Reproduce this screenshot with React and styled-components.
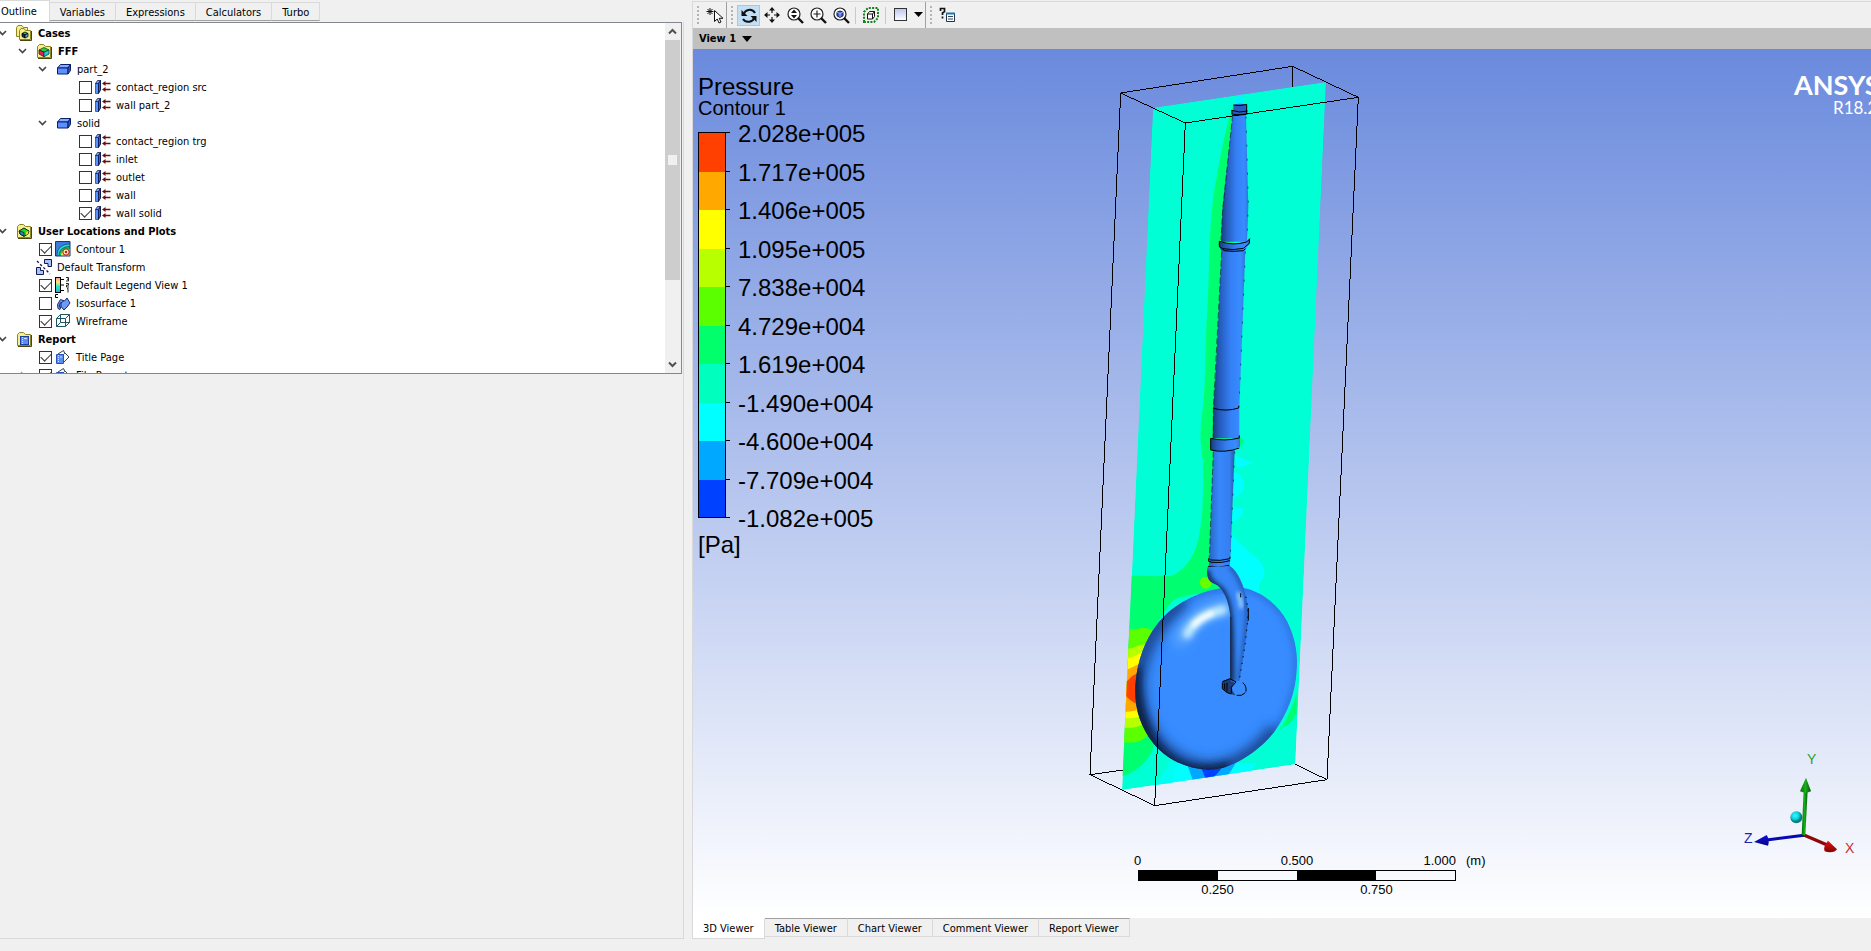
import { useState } from "react";
import styled, { createGlobalStyle, css } from "styled-components";

const GlobalStyle = createGlobalStyle`
    * {
        box-sizing: border-box;
    }

    body {
        margin: 0;
        background: #f0f0f0;
        color: #000;
        font-family: "DejaVu Sans Condensed", "Noto Sans", sans-serif;
        font-size: 11px;
        line-height: 18px;
    }

    button, input {
        font: inherit;
        color: inherit;
        margin: 0;
        padding: 0;
        border: 0;
        background: none;
    }

    ul {
        list-style: none;
        margin: 0;
        padding: 0;
    }
`

/* ---------- tree icons ---------- */

const Folder = ({ children }) => (
    <>
        <path d="M1.500 14.500V3.500l2-2h4l2 2h5v11z" fill="#f5ef8e" stroke="#8c8420" />
        <path d="M15.500 4v11.500H2" fill="none" stroke="#4a4510" />
        {children}
    </>
)

const cube = (
    <>
        <path d="M3 7l5-2.500L13 7 8 9.200z" fill="#25d62c" stroke="#06280a" strokeWidth=".7" />
        <path d="M3 7l5 2.200v4.500L3 11z" fill="#e0235e" stroke="#3b0616" strokeWidth=".7" />
        <path d="M13 7L8 9.200v4.500l5-2.700z" fill="#27c8dc" stroke="#06303b" strokeWidth=".7" />
    </>
)

const icons = {
    cases: (
        <>
            <path d="M.5 11.500V2.500l1.500-2h4l1.500 2h4v9z" fill="#f5ef8e" stroke="#8c8420" />
            <path d="M3.500 14.500V5.500l1.500-2h3l1.500 2h5v9z" fill="#f5ef8e" stroke="#8c8420" />
            <path d="M15.500 6v9.500H4" fill="none" stroke="#4a4510" />
            <path d="M6 8.500L9 7l3 1.500-3 1.300z" fill="#25d62c" stroke="#000" strokeWidth=".8" />
            <path d="M6 8.500l3 1.300V13l-3-1.500z" fill="#1c2c6b" stroke="#000" strokeWidth=".8" />
            <path d="M12 8.500L9 9.800V13l3-1.500z" fill="#27c8dc" stroke="#000" strokeWidth=".8" />
        </>
    ),
    fff: <Folder>{cube}</Folder>,
    plots: (
        <Folder>
            <path d="M3 8l5-3 5 3-1 3-4 2.500L4 11z" fill="#25d62c" stroke="#06280a" />
            <path d="M3.500 8L8 9.500V13l-4-2z" fill="#2a8bd8" stroke="#06280a" strokeWidth=".8" />
            <path d="M10 9l2.500-1-.5 3-2 1z" fill="#e8d92b" />
        </Folder>
    ),
    report: (
        <Folder>
            <rect x="4.500" y="5.500" width="8" height="8" fill="#5b8df0" stroke="#1d3f9c" />
            <path d="M6.500 6v7" stroke="#d6e4ff" strokeDasharray="1 1" />
            <path d="M8 7.500h3" stroke="#d6e4ff" />
        </Folder>
    ),
    body: (
        <>
            <path d="M1.500 7L4.500 3.500h10L12 7z" fill="#86abff" stroke="#0a1f6b" />
            <path d="M1.500 7H12v6H1.500z" fill="#5c90ff" stroke="#0a1f6b" />
            <path d="M12 7l2.500-3.500v6L12 13z" fill="#2c56c4" stroke="#0a1f6b" />
        </>
    ),
    region: (
        <>
            <path d="M.5 4.500h3v10h-3z" fill="#5b90ff" stroke="#24479c" strokeWidth=".8" />
            <path d="M.5 4.500l2-3h3l-2 3z" fill="#86abff" stroke="#0e1f55" strokeWidth=".8" />
            <path d="M3.500 4.500l2-3v9.500l-2 3.500z" fill="#2f62d8" stroke="#0e1f55" />
            <path d="M9 4.500h6.500M9 10.500h6.500" stroke="#6b1010" strokeWidth="1.300" />
            <path d="M7 4.500l3.500-2.500v5zM7 10.500L10.500 8v5z" fill="#6b1010" />
        </>
    ),
    contour: (
        <>
            <rect x="1" y="1" width="14" height="14" fill="#3e7bdb" />
            <path d="M2 15C2 7 7 3 15 3v12z" fill="#25d6d6" />
            <path d="M4 15c0-6 4-9.500 11-9.500V15z" fill="#17b84e" />
            <path d="M6 15c0-4.500 3-7 9-7v7z" fill="#f3ec5d" />
            <circle cx="11" cy="11" r="3.200" fill="#fbe9a0" stroke="#a3182c" />
            <circle cx="11" cy="11" r="1.200" fill="#c2182c" />
            <path d="M2 15C2 7 7 3 15 3M4 15c0-6 4-9.500 11-9.500" fill="none" stroke="#073a4a" strokeWidth=".6" />
            <path d="M.5.500h14.500v14.500H.5z" fill="none" stroke="#19386e" />
        </>
    ),
    transform: (
        <>
            <path d="M.5 8.500h4v3h3v4h-7z" fill="#a9c1ff" stroke="#10194a" />
            <path d="M8.500.5h7v7h-3.500v-3H8.500z" fill="#a9c1ff" stroke="#10194a" />
            <path d="M1 2l13 13" stroke="#10194a" strokeWidth="1.300" strokeDasharray="2.500 2" />
        </>
    ),
    legend: (
        <>
            <rect x=".5" y=".5" width="5" height="15" fill="url(#legendRamp)" stroke="#000" />
            <path d="M6 2.500h3M6 8h3M6 13.500h3" stroke="#000" />
            <path d="M11 .5h2.500v3.500H11M12 2.200h1.500M11 6.500h2.500v1.700H11.500V10H14M12 12l1-.7V15.500" fill="none" stroke="#222" />
        </>
    ),
    iso: (
        <>
            <path d="M3-.5H.5v3H3" fill="none" stroke="#000" />
            <path d="M2.500 9.500l3-5 4 1.500L12 3l3 5-3 4-3 3-3-3.500-1 3-2-1z" fill="#6f9bf5" stroke="#122a70" />
            <path d="M6 7.500c-2 1-2 3-1 5M9 5.500L6 8v3.500" fill="none" stroke="#122a70" />
        </>
    ),
    wireframe: (
        <>
            <path d="M1.500 5.500h9v8h-9zM5.500 1.500h9v8h-9zM1.500 5.500l4-4M10.500 5.500l4-4M10.500 13.500l4-4M1.500 13.500l4-4" fill="none" stroke="#1e5566" />
        </>
    ),
    page: (
        <>
            <path d="M8.500 2.500L14 8l-5.500 5.500z" fill="#fff" stroke="#345" />
            <path d="M3 5l5.500-3.500L10 5" fill="#fff" stroke="#345" />
            <path d="M1.500 5.500h7v9h-7z" fill="#5b8df0" stroke="#2a52b5" />
            <path d="M3.500 6v8" stroke="#d6e4ff" strokeDasharray="1 1" />
            <path d="M5 8h2" stroke="#d6e4ff" />
        </>
    ),
}

const TreeIcon = ({ name }) => (
    <svg width="16" height="16" viewBox="0 0 16 16" overflow="visible" aria-hidden="true">
        {icons[name]}
    </svg>
)

/* ---------- outline tree ---------- */

const treeRows = [
    { id: "cases", label: "Cases", icon: "cases", level: 0, arrow: "open", bold: true },
    { id: "fff", label: "FFF", icon: "fff", level: 1, arrow: "open", bold: true },
    { id: "part2", label: "part_2", icon: "body", level: 2, arrow: "open" },
    { id: "src", label: "contact_region src", icon: "region", level: 3, checked: false },
    { id: "wallpart", label: "wall part_2", icon: "region", level: 3, checked: false },
    { id: "solid", label: "solid", icon: "body", level: 2, arrow: "open" },
    { id: "trg", label: "contact_region trg", icon: "region", level: 3, checked: false },
    { id: "inlet", label: "inlet", icon: "region", level: 3, checked: false },
    { id: "outlet", label: "outlet", icon: "region", level: 3, checked: false },
    { id: "wall", label: "wall", icon: "region", level: 3, checked: false },
    { id: "wallsolid", label: "wall solid", icon: "region", level: 3, checked: true },
    { id: "plots", label: "User Locations and Plots", icon: "plots", level: 0, arrow: "open", bold: true },
    { id: "contour", label: "Contour 1", icon: "contour", level: 1, checked: true },
    { id: "transform", label: "Default Transform", icon: "transform", level: 1 },
    { id: "legendview", label: "Default Legend View 1", icon: "legend", level: 1, checked: true },
    { id: "iso", label: "Isosurface 1", icon: "iso", level: 1, checked: false },
    { id: "wireframe", label: "Wireframe", icon: "wireframe", level: 1, checked: true },
    { id: "report", label: "Report", icon: "report", level: 0, arrow: "open", bold: true },
    { id: "title", label: "Title Page", icon: "page", level: 1, checked: true },
    { id: "file", label: "File Report", icon: "page", level: 1, checked: true, arrow: "closed" },
]

const TreeRow = ({ row }) => {
    const [checked, setChecked] = useState(row.checked);
    const hasBox = row.checked !== undefined;

    return (
        <Row $level={row.level}>
            <ArrowSlot>
                {row.arrow &&
                    <button aria-label={`Toggle ${row.label}`}>
                        <svg width="9" height="9" viewBox="0 0 9 9">
                            {row.arrow === "open"
                                ? <path d="M1 2l3.500 3.500L8 2" fill="none" stroke="#444" strokeWidth="1.600" />
                                : <path d="M3 1l3.500 3.500L3 8" fill="none" stroke="#a0a0a0" strokeWidth="1.400" />}
                        </svg>
                    </button>
                }
            </ArrowSlot>
            {hasBox &&
                <CheckBox id={row.id} type="checkbox" checked={checked} onChange={() => setChecked(!checked)} />
            }
            <TreeIcon name={row.icon} />
            <RowLabel as={hasBox ? "label" : "span"} htmlFor={hasBox ? row.id : undefined} $bold={row.bold}>
                {row.label}
            </RowLabel>
        </Row>
    )
}

/* ---------- toolbar icons ---------- */

const Lens = ({ children }) => (
    <>
        <circle cx="8" cy="8" r="6" fill="#fff" stroke="#222" strokeWidth="1.200" />
        <path d="M12 12l5 5" stroke="#111" strokeWidth="2.400" />
        {children}
    </>
)

const tools = {
    select: (
        <>
            <path d="M4 2v7M.5 5.500h7M1.500 3l5 5M6.500 3l-5 5" stroke="#111" strokeWidth="1" />
            <path d="M8.500 4.500v11l2.700-2.500 1.800 4 2-1-1.800-3.700H17z" fill="#fff" stroke="#111" />
        </>
    ),
    rotate: (
        <>
            <path d="M4 8C5 3.500 12 2 15 7" fill="none" stroke="#111" strokeWidth="2" />
            <path d="M1.500 4v6h6z" fill="#111" />
            <path d="M14 12c-1 4-8 5.500-11 1" fill="none" stroke="#111" strokeWidth="2" />
            <path d="M16.500 16v-6h-6z" fill="#111" />
        </>
    ),
    pan: (
        <>
            <path d="M9 3v4M9 11v4M3 9h4M11 9h4" stroke="#111" strokeWidth="1.200" />
            <path d="M9 1l3 3.500H6zM9 17l3-3.500H6zM1 9l3.500-3v6zM17 9l-3.500-3v6z" fill="#111" />
        </>
    ),
    zoom: <Lens><path d="M8 3.500l3 3.500H5zM8 12.500l3-3.500H5z" fill="#111" /></Lens>,
    zoomBox: <Lens><path d="M8 4.500v7M4.500 8h7" stroke="#222" strokeWidth="1.200" /></Lens>,
    fit: (
        <Lens>
            <path d="M5 6.200L8 5l3 1.200v3.600L8 11.500 5 9.800z" fill="#3d5ed0" stroke="#0b164d" />
            <path d="M5 6.200l3 1.300 3-1.300M8 7.500v4" fill="none" stroke="#b9c8ff" strokeWidth=".8" />
        </Lens>
    ),
    highlight: (
        <>
            <path d="M2 16V6l4-4h10v10l-4 4z" fill="none" stroke="#14811c" strokeWidth="2" strokeDasharray="2 1.300" />
            <path d="M5.500 8h5v5h-5zM5.500 8l2-2.500h5L10.500 8M12.500 5.500v5l-2 2.500" fill="#fff" stroke="#111" />
        </>
    ),
    background: <rect x="2.500" y="2.500" width="12" height="12" fill="url(#swatch)" stroke="#333" />,
    drop: <path d="M0 6h9l-4.500 5z" fill="#000" />,
    help: (
        <>
            <path d="M1.500 5V2.500h4v3l-2 1.500v2M3.500 10.500v2" fill="none" stroke="#111" strokeWidth="1.700" />
            <path d="M7.500 7.500h8v8h-8z" fill="#fff" stroke="#1c3550" />
            <path d="M7 7.500h9" stroke="#1b76ae" strokeWidth="2" />
            <path d="M9 10.500h5M9 13h5" stroke="#345" />
        </>
    ),
}

const Tool = ({ name, label, active, narrow }) => (
    <ToolButton aria-label={label} $active={active} $narrow={narrow}>
        <svg width={narrow ? 9 : 18} height="18" viewBox={narrow ? "0 0 9 18" : "0 0 18 18"}>{tools[name]}</svg>
    </ToolButton>
)

/* ---------- legend ---------- */

const bands = ["#ff4000", "#ffa800", "#ffff00", "#b8ff00", "#5cff00", "#00ff6a", "#00ffbf", "#00ffff", "#00a8ff", "#0040ff"]
const levels = [
    "2.028e+005", "1.717e+005", "1.406e+005", "1.095e+005", "7.838e+004", "4.729e+004",
    "1.619e+004", "-1.490e+004", "-4.600e+004", "-7.709e+004", "-1.082e+005",
]

const Legend = () => (
    <LegendBox>
        <LegendTitle>Pressure</LegendTitle>
        <LegendName>Contour 1</LegendName>
        <LegendBody>
            <svg width="33" height="387" viewBox="0 0 33 387" shapeRendering="crispEdges" aria-hidden="true">
                {bands.map((color, i) => (
                    <rect key={color} x="1" y={i * 38.5 + 1} width="27" height="38.5" fill={color} />
                ))}
                <rect x=".5" y=".5" width="27" height="385" fill="none" stroke="#000" />
                {levels.map((level, i) => (
                    <path key={level} d={`M28 ${i * 38.5 + 0.5}h4`} stroke="#000" />
                ))}
            </svg>
            <Levels>
                {levels.map((level) => <li key={level}>{level}</li>)}
            </Levels>
        </LegendBody>
        <LegendUnit>[Pa]</LegendUnit>
    </LegendBox>
)

/* ---------- landing gear model ---------- */

const wheel = "M500 1611C560 1615 620 1655 652 1715C676 1765 684 1810 680 1860C676 1930 655 1985 612 2047C560 2110 480 2160 415 2160C350 2155 290 2130 250 2080C210 2030 192 1970 196 1905C202 1830 225 1770 262 1722C300 1672 370 1630 440 1617C460 1612 480 1610 500 1611Z"

const Model = () => (
    <ModelSvg viewBox="693 49 1178 869" aria-label="Pressure contour on landing gear">
        <defs>
            <linearGradient id="pole" x1="0" x2="1">
                <stop offset="0" stopColor="#183c78" />
                <stop offset=".2" stopColor="#2459b8" />
                <stop offset=".55" stopColor="#357ff5" />
                <stop offset=".85" stopColor="#388cff" />
                <stop offset="1" stopColor="#3076dd" />
            </linearGradient>
            <linearGradient id="lowerPole" x1="0" x2="1">
                <stop offset="0" stopColor="#2a62bd" />
                <stop offset=".4" stopColor="#3788fc" />
                <stop offset=".8" stopColor="#357ff0" />
                <stop offset="1" stopColor="#2459b0" />
            </linearGradient>
            <clipPath id="planeClip"><path d="M249 173L768 96L676 2143L156 2220Z" /></clipPath>
            <clipPath id="wheelClip"><path d={wheel} /></clipPath>
            <clipPath id="forkClip"><path d="M412 1552L480 1548C505 1565 522 1610 528 1640C540 1690 534 1720 526 1780L508 1895H482V1710C480 1660 462 1615 435 1602C416 1596 408 1580 412 1552Z" /></clipPath>
            <filter id="soft" x="-30%" y="-30%" width="160%" height="160%"><feGaussianBlur stdDeviation="18" /></filter>
            <filter id="glow" x="-50%" y="-50%" width="200%" height="200%"><feGaussianBlur stdDeviation="10" /></filter>
            <filter id="fine" x="-50%" y="-50%" width="200%" height="200%"><feGaussianBlur stdDeviation="6" /></filter>
        </defs>
        <g transform="translate(1070 50) scale(.33333)">
            <g fill="none" stroke="#000" strokeWidth="3" shapeRendering="crispEdges">
                <path d="M668 49V110M60 2174L160 2160" />
            </g>

            {/* contour plane */}
            <g clipPath="url(#planeClip)">
                <path d="M249 173L768 96L676 2143L156 2220Z" fill="#00ffd4" />
                <path d="M490 165C470 220 450 320 430 440C415 560 418 700 412 780C405 880 408 1000 398 1080C385 1160 395 1200 400 1240L400 1300C398 1380 395 1420 385 1470C370 1530 340 1560 310 1576C270 1582 230 1576 150 1578V2180C200 2170 240 2130 255 2080L500 1800L470 1500L500 165Z" fill="#00ff70" />
                <path d="M262 1722C290 1670 310 1640 340 1640C370 1635 380 1625 400 1640L340 1700Z" fill="#00ffd4" />
                <path d="M500 140L515 132L520 160H495Z" fill="#00f4ff" />
                <path d="M482 1445C500 1475 530 1495 555 1520C590 1550 590 1570 572 1595C562 1610 570 1640 574 1660L520 1640L470 1550Z" fill="#00ffff" />
                <path d="M494 1215L550 1240L500 1255ZM492 1265C510 1270 525 1290 522 1310C520 1330 500 1340 490 1345ZM490 1370L520 1375C522 1395 500 1412 486 1418Z" fill="#00ffff" />
                <path d="M510 1160L522 1172L510 1192Z" fill="#00ff70" />
                <circle cx="407" cy="1598" r="18" fill="#66ff00" />
                <path d="M150 1741L200 1736C230 1730 250 1735 262 1760L240 2045C220 2080 190 2080 140 2076Z" fill="#5cff00" />
                <path d="M150 1800L190 1793C210 1785 222 1780 235 1785L215 2025C195 2035 180 2034 140 2032Z" fill="#b8ff00" />
                <path d="M150 1832C180 1825 205 1815 215 1805L230 1985C205 2005 190 2006 140 2004Z" fill="#ffff00" />
                <path d="M150 1866C180 1858 195 1845 210 1842L220 1970C200 1982 190 1986 140 1985Z" fill="#ffa800" />
                <path d="M150 1896L171 1894C180 1885 190 1870 205 1872L205 1965C185 1955 175 1945 168 1938L150 1940Z" fill="#ff4000" />
                <path d="M270 2220L310 2140H560L520 2190Z" fill="#00ffff" />
                <path d="M240 2220C270 2190 290 2160 300 2130L320 2140L300 2220Z" fill="#00fff0" />
                <path d="M352 2145L370 2195H460C480 2170 490 2150 500 2135Z" fill="#00a8ff" />
                <path d="M392 2150L408 2188H422C440 2175 450 2160 458 2150Z" fill="#0040ff" />
                <path d="M630 2040C650 2010 668 1970 680 1930V1990C668 2010 660 2030 630 2032Z" fill="#00ff70" />
            </g>

            {/* wheel */}
            <g clipPath="url(#wheelClip)">
                <path d={wheel} fill="#388cff" />
                <path d={wheel} fill="none" stroke="#2f76e6" strokeWidth="24" filter="url(#glow)" />
                <path d="M340 1650C230 1730 190 1850 200 1930C210 2050 290 2150 410 2160C500 2160 570 2110 620 2040" fill="none" stroke="#1f4c98" strokeWidth="56" filter="url(#soft)" />
                <path d="M196 1850C185 1990 240 2110 330 2150C370 2168 430 2170 480 2155" fill="none" stroke="#0e2347" strokeWidth="36" filter="url(#glow)" />
                <path d="M325 1785C350 1710 420 1670 500 1668" fill="none" stroke="#5aa6ff" strokeWidth="46" filter="url(#soft)" />
                <path d="M352 1752C372 1712 410 1690 458 1680" fill="none" stroke="#c8f0ff" strokeWidth="28" strokeLinecap="round" filter="url(#glow)" />
                <path d="M372 1724C390 1706 408 1696 425 1690" fill="none" stroke="#fff" strokeWidth="14" strokeLinecap="round" filter="url(#fine)" />
            </g>

            {/* strut */}
            <path d="M488 195L528 195L535 470L531 575H453L458 470Z" fill="url(#pole)" />
            <path d="M490 165Q510 158 530 165V182L533 193Q508 202 485 193V180H490Z" fill="#265fbe" />
            <path d="M455 600H526L508 1075V1165H428L430 1075L438 950Z" fill="url(#pole)" />
            <path d="M448 575Q495 590 540 568V580Q530 590 527 600Q490 610 455 603L448 590Z" fill="url(#pole)" />
            <path d="M422 1165Q465 1175 510 1160V1190Q465 1212 422 1200Z" fill="url(#pole)" />
            <path d="M430 1203L494 1200L481 1530L478 1552L416 1554L418 1530Z" fill="url(#lowerPole)" />
            <g fill="none" stroke="#000" strokeWidth="3">
                <path d="M490 165Q510 170 530 163M485 181Q508 190 533 183M485 192Q508 198 533 191M530 163V192M486 180V192" />
                <path d="M448 574Q490 588 530 576L540 566M448 574V590L458 596Q490 602 520 595L538 580V566M458 597L464 602Q490 606 520 602L526 596" />
                <path d="M430 1075Q468 1086 506 1074V1068M422 1165Q465 1175 508 1164V1156M422 1165V1200Q465 1210 508 1194" />
                <path d="M416 1525L422 1530Q450 1534 480 1526V1520M416 1525V1534L426 1537Q455 1540 480 1532M414 1550Q445 1556 478 1546" />
            </g>
            <g fill="none" stroke="#0b1c3c" strokeWidth="2">
                <path d="M488 195L458 480L453 570M455 605L430 1075V1160M430 1205L418 1522" strokeDasharray="18 8" />
                <path d="M528 200L535 460L531 570M526 605L507 1070M494 1205L481 1520" strokeDasharray="6 36" />
            </g>

            {/* fork and axle */}
            <path d="M457 1893L478 1886L495 1900V1936L470 1928L457 1918Z" fill="#1c3e78" />
            <g clipPath="url(#forkClip)">
                <rect x="400" y="1540" width="150" height="360" fill="#3785f7" />
                <path d="M410 1560C408 1600 440 1605 455 1625C478 1660 482 1700 482 1895" fill="none" stroke="#163668" strokeWidth="24" filter="url(#fine)" />
                <path d="M480 1548C515 1590 530 1640 532 1690C530 1760 515 1840 508 1895" fill="none" stroke="#2257ae" strokeWidth="12" filter="url(#fine)" />
                <path d="M503 1628C512 1645 514 1660 514 1675" fill="none" stroke="#c4f1ff" strokeWidth="9" filter="url(#fine)" />
            </g>
            <circle cx="507" cy="1915" r="21" fill="#388cff" />
            <g fill="none" stroke="#000" strokeWidth="3">
                <path d="M482 1700V1890" strokeWidth="2" />
                <path d="M458 1895L480 1886L498 1896M457 1898V1916L472 1928L484 1932M484 1912L498 1896M484 1912V1930M464 1900V1918M471 1898V1924M500 1936Q515 1940 526 1928M518 1898Q530 1906 528 1925" />
                <path d="M528 1640L535 1690L526 1780L508 1890" strokeDasharray="4 16" />
                <path d="M535 1674V1712M512 1630V1642" />
            </g>

            {/* domain wireframe */}
            <path
                d="M152 129L668 49L865 142L346 219ZM152 129L60 2174L254 2267L771 2189L865 142M346 219L254 2267M676 2143L771 2189"
                fill="none" stroke="#000" strokeWidth="3" shapeRendering="crispEdges"
            />
        </g>
    </ModelSvg>
)

const Triad = () => (
    <TriadSvg width="151" height="130" viewBox="0 0 453 390" aria-label="Axes">
        <defs>
            <linearGradient id="axisY"><stop offset="0" stopColor="#0a6a0e" /><stop offset=".5" stopColor="#16b01b" /><stop offset="1" stopColor="#07500a" /></linearGradient>
            <linearGradient id="axisX" x1="0" y1="0" x2="0" y2="1"><stop offset="0" stopColor="#f21010" /><stop offset="1" stopColor="#7c0505" /></linearGradient>
            <linearGradient id="axisZ" x1="0" y1="0" x2="0" y2="1"><stop offset="0" stopColor="#1010e8" /><stop offset="1" stopColor="#050578" /></linearGradient>
            <radialGradient id="ball" cx=".4" cy=".35"><stop offset="0" stopColor="#38f6ff" /><stop offset=".6" stopColor="#10d4e0" /><stop offset="1" stopColor="#077d88" /></radialGradient>
        </defs>
        <path d="M250 284L320 314" stroke="#8b0909" strokeWidth="10" />
        <path d="M324 302L351 328L345 334Q330 340 314 334Q308 322 324 302Z" fill="url(#axisX)" />
        <path d="M252 286L140 300" stroke="#0808b4" strokeWidth="9" />
        <path d="M102 306L140 285Q150 300 144 317Z" fill="url(#axisZ)" />
        <circle cx="229" cy="232" r="18" fill="url(#ball)" />
        <path d="M245 286L251 150H263L256 286Z" fill="url(#axisY)" />
        <path d="M258 113L273 154Q258 162 240 154Z" fill="url(#axisY)" />
        <text x="261" y="71" fill="#2aa02e">Y</text>
        <text x="72" y="308" fill="#2222b0">Z</text>
        <text x="375" y="338" fill="#c83030">X</text>
    </TriadSvg>
)

const Scale = () => (
    <ScaleBox>
        <ScaleTop>
            <span>0</span>
            <span>0.500</span>
            <span>1.000</span>
            <span>(m)</span>
        </ScaleTop>
        <ScaleBar>
            <i /><i /><i /><i />
        </ScaleBar>
        <ScaleBottom>
            <span>0.250</span>
            <span>0.750</span>
        </ScaleBottom>
    </ScaleBox>
)

export default function App() {
    const [leftTab, setLeftTab] = useState("Outline");
    const [viewTab, setViewTab] = useState("3D Viewer");

    return (
        <Page>
            <GlobalStyle />
            <Swatches width="0" height="0" aria-hidden="true">
                <defs>
                    <linearGradient id="legendRamp" x1="0" y1="0" x2="0" y2="1">
                        <stop offset="0" stopColor="#ff8f8f" />
                        <stop offset=".3" stopColor="#ffe680" />
                        <stop offset=".6" stopColor="#35e0c0" />
                        <stop offset="1" stopColor="#18b8e0" />
                    </linearGradient>
                    <linearGradient id="swatch" x1="0" y1="0" x2="0" y2="1">
                        <stop offset="0" stopColor="#b9c6f0" />
                        <stop offset="1" stopColor="#fff" />
                    </linearGradient>
                </defs>
            </Swatches>

            <Side>
                <SideTabs>
                    {["Outline", "Variables", "Expressions", "Calculators", "Turbo"].map((name) => (
                        <SideTab key={name} $active={name === leftTab} onClick={() => setLeftTab(name)}>{name}</SideTab>
                    ))}
                </SideTabs>
                <SideBody>
                    <TreeBox>
                        <TreeList>
                            {treeRows.map((row) => <TreeRow key={row.id} row={row} />)}
                        </TreeList>
                        <ScrollTrack>
                            <button aria-label="Scroll up">
                                <svg width="9" height="9" viewBox="0 0 9 9"><path d="M1 6.500L4.500 3 8 6.500" fill="none" stroke="#505050" strokeWidth="2" /></svg>
                            </button>
                            <ScrollThumb><i /></ScrollThumb>
                            <button aria-label="Scroll down">
                                <svg width="9" height="9" viewBox="0 0 9 9"><path d="M1 2.500L4.500 6 8 2.500" fill="none" stroke="#505050" strokeWidth="2" /></svg>
                            </button>
                        </ScrollTrack>
                    </TreeBox>
                </SideBody>
            </Side>

            <Viewer>
                <ToolBar>
                    <ToolGroup>
                        <Grip />
                        <Tool name="select" label="Select" />
                    </ToolGroup>
                    <ToolGroup>
                        <Grip />
                        <Tool name="rotate" label="Rotate" active />
                        <Tool name="pan" label="Pan" />
                        <Tool name="zoom" label="Zoom" />
                        <Tool name="zoomBox" label="Zoom box" />
                        <Tool name="fit" label="Fit view" />
                        <Divider />
                        <Tool name="highlight" label="Highlight" />
                        <Divider />
                        <Tool name="background" label="Background" />
                        <Tool name="drop" label="Background options" narrow />
                    </ToolGroup>
                    <ToolGroup $last>
                        <Grip />
                        <Tool name="help" label="Help" />
                    </ToolGroup>
                </ToolBar>
                <ViewTitle>
                    View 1
                    <svg width="10" height="6" viewBox="0 0 10 6"><path d="M0 0h10L5 6z" /></svg>
                </ViewTitle>
                <Canvas>
                    <Model />
                    <Legend />
                    <Brand>
                        <strong>ANSYS</strong>
                        <span>R18.2</span>
                    </Brand>
                    <Scale />
                    <Triad />
                </Canvas>
                <ViewTabs>
                    {["3D Viewer", "Table Viewer", "Chart Viewer", "Comment Viewer", "Report Viewer"].map((name) => (
                        <ViewTab key={name} $active={name === viewTab} onClick={() => setViewTab(name)}>{name}</ViewTab>
                    ))}
                </ViewTabs>
            </Viewer>
        </Page>
    )
}

/* ---------- styles ---------- */

const Page = styled.main`
    display: grid;
    grid-template-columns: 684fr 1187fr;
    min-height: 100vh;
    padding-bottom: 12px;
    overflow: hidden;
`

const Swatches = styled.svg`
    position: absolute;
`

const Side = styled.section`
    display: flex;
    flex-direction: column;
    min-width: 0;
`

const SideTabs = styled.nav`
    display: flex;
    align-items: flex-end;
    height: 22px;
    padding-bottom: 1px;
`

const SideTab = styled.button`
    height: 19px;
    padding: 1px 10px 0;
    border-top: 1px solid #d9d9d9;
    border-right: 1px solid #d9d9d9;
    border-bottom: 1px solid #a0a0a0;
    line-height: 18px;

    ${({ $active }) => $active && css`
        height: 22px;
        padding: 0 12px 0 1px;
        margin-bottom: -1px;
        background: #fff;
        border-bottom: 0;
    `}
`

const SideBody = styled.div`
    flex: 1;
    border: solid #d9d9d9;
    border-width: 0 1px 1px 0;
    padding-right: 1px;
`

const TreeBox = styled.div`
    display: flex;
    height: 37vh;
    background: #fff;
    border: solid #828790;
    border-width: 1px 1px 1px 0;
    overflow: hidden;
`

const TreeList = styled.ul`
    flex: 1;
    padding-top: 1px;
`

const Row = styled.li`
    display: flex;
    align-items: center;
    height: 18px;
    padding-left: ${({ $level }) => $level * 20}px;

    > svg {
        flex: none;
    }
`

const ArrowSlot = styled.span`
    display: flex;
    width: 16px;

    button {
        display: flex;
        margin-left: -2px;
    }
`

const CheckBox = styled.input`
    appearance: none;
    display: grid;
    place-items: center;
    width: 13px;
    height: 13px;
    margin: 0 3px;
    border: 1px solid #333;
    background: #fff;

    &:checked::after {
        content: "";
        width: 9px;
        height: 5px;
        margin-bottom: 3px;
        border: solid #333;
        border-width: 0 0 1px 1px;
        transform: rotate(-45deg);
    }
`

const RowLabel = styled.span`
    margin-left: ${({ $bold }) => $bold ? 6 : 5}px;
    padding-top: 1px;
    white-space: nowrap;
    font-weight: ${({ $bold }) => $bold ? "bold" : "normal"};
`

const ScrollTrack = styled.div`
    display: flex;
    flex-direction: column;
    width: 16px;
    background: #f0f0f0;

    button {
        display: flex;
        align-items: center;
        justify-content: center;
        width: 15px;
        height: 17px;
    }

    button:last-child {
        margin-top: auto;
    }
`

const ScrollThumb = styled.div`
    display: grid;
    place-items: center;
    height: 76%;
    width: 15px;
    background: #cdcdcd;
    flex: 0 0 auto;
    max-height: 240px;

    i {
        width: 9px;
        height: 10px;
        background: #f0f0f0;
    }
`

const Viewer = styled.section`
    display: flex;
    flex-direction: column;
    min-width: 0;
    margin: 1px 0 0 8px;
    border: solid #d9d9d9;
    border-width: 1px 0 0 1px;
`

const ToolBar = styled.div`
    display: flex;
    height: 26px;
`

const ToolGroup = styled.div`
    display: flex;
    align-items: center;
    padding-left: 4px;
    border-right: ${({ $last }) => $last ? "0" : "1px solid #a0a0a0"};
`

const Grip = styled.span`
    width: 2px;
    height: 18px;
    margin-right: 4px;
    background: repeating-linear-gradient(#b4b4b4 0 2px, transparent 2px 4px);
`

const Divider = styled.span`
    width: 1px;
    height: 17px;
    margin: 0 3px;
    background: #c8c8c8;
`

const ToolButton = styled.button`
    display: flex;
    align-items: center;
    justify-content: center;
    width: ${({ $narrow }) => $narrow ? "13px" : "23px"};
    height: 21px;
    border: 1px solid transparent;

    ${({ $active }) => $active && css`
        background: #c2e0f5;
        border-color: #99cdf0;
    `}
`

const ViewTitle = styled.h1`
    display: flex;
    align-items: center;
    gap: 6px;
    height: 21px;
    margin: 0;
    padding-left: 6px;
    background: #c0c0c0;
    font-size: 11px;
`

const Canvas = styled.div`
    position: relative;
    flex: 1;
    overflow: hidden;
    background: linear-gradient(#6a8add, #fff);
    font-family: "Liberation Sans", Arial, sans-serif;
`

const ModelSvg = styled.svg`
    position: absolute;
    inset: 0;
    width: 100%;
    height: 100%;
`

const LegendBox = styled.section`
    position: relative;
    width: 200px;
    padding: 26px 0 0 5px;
    font-size: 24px;
`

const LegendTitle = styled.h2`
    margin: 0;
    font-size: 24px;
    font-weight: normal;
    line-height: 24px;
`

const LegendName = styled.p`
    margin: 0;
    font-size: 20px;
    line-height: 18px;
`

const LegendBody = styled.div`
    display: flex;
    gap: 7px;
    padding-top: 15px;

    svg {
        flex: none;
    }
`

const Levels = styled.ul`
    display: flex;
    flex-direction: column;
    justify-content: space-between;
    margin: -10px 0 -12px;

    li {
        line-height: 24px;
        white-space: nowrap;
    }
`

const LegendUnit = styled.p`
    margin: 12px 0 0;
    line-height: 28px;
`

const Brand = styled.div`
    position: absolute;
    top: 22px;
    right: 0;
    display: flex;
    flex-direction: column;
    width: 77px;
    color: #fff;
    font-family: Lato, "Noto Sans", sans-serif;
    white-space: nowrap;

    strong {
        font-size: 27px;
        line-height: 28px;
    }

    span {
        padding-left: 39px;
        font-size: 17px;
        line-height: 18px;
    }
`

const ScaleBox = styled.div`
    position: absolute;
    bottom: 19px;
    left: calc(50% - 144px);
    width: 318px;
    font-size: 13px;
    line-height: 18px;
`

const ScaleTop = styled.div`
    display: grid;
    grid-template-columns: repeat(3, 1fr);

    span:nth-child(1) {
        margin-left: -4px;
    }

    span:nth-child(2) {
        text-align: center;
    }

    span:nth-child(3) {
        text-align: right;
    }

    span:nth-child(4) {
        position: absolute;
        left: 328px;
    }
`

const ScaleBar = styled.div`
    display: flex;
    height: 11px;
    border: 1px solid #000;

    i {
        flex: 1;
    }

    i:nth-child(odd) {
        background: #000;
    }
`

const ScaleBottom = styled.div`
    display: grid;
    grid-template-columns: 1fr 1fr;
    text-align: center;
`

const TriadSvg = styled.svg`
    position: absolute;
    right: 0;
    bottom: 48px;

    text {
        font-size: 42px;
    }
`

const ViewTabs = styled.nav`
    display: flex;
    align-items: flex-start;
    height: 21px;
`

const ViewTab = styled.button`
    height: 19px;
    padding: 1px 10px 0;
    border-top: 1px solid #a0a0a0;
    border-right: 1px solid #d9d9d9;
    border-bottom: 1px solid #d9d9d9;
    line-height: 18px;

    ${({ $active }) => $active && css`
        height: 21px;
        border-top-color: #fff;
        background: #fff;
    `}
`
